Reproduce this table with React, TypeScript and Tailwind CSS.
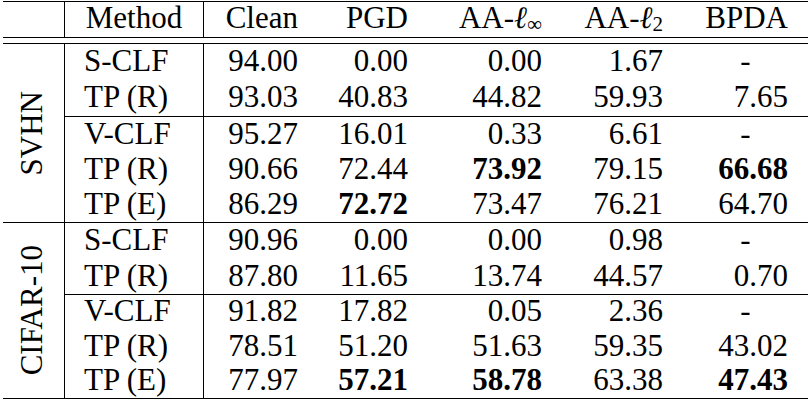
import React from 'react';

type Row = {
    method: string;
    vals: string[];
    bold?: number[];
};

type Group = {
    name: string;
    sub: { rows: Row[]; heights: number[] }[];
};

const groups: Group[] = [
    {
        name: 'SVHN',
        sub: [
            {
                heights: [36, 36],
                rows: [
                    { method: 'S-CLF', vals: ['94.00', '0.00', '0.00', '1.67', '-'] },
                    { method: 'TP (R)', vals: ['93.03', '40.83', '44.82', '59.93', '7.65'] },
                ],
            },
            {
                heights: [35, 35, 35],
                rows: [
                    { method: 'V-CLF', vals: ['95.27', '16.01', '0.33', '6.61', '-'] },
                    { method: 'TP (R)', vals: ['90.66', '72.44', '73.92', '79.15', '66.68'], bold: [2, 4] },
                    { method: 'TP (E)', vals: ['86.29', '72.72', '73.47', '76.21', '64.70'], bold: [1] },
                ],
            },
        ],
    },
    {
        name: 'CIFAR-10',
        sub: [
            {
                heights: [36, 35],
                rows: [
                    { method: 'S-CLF', vals: ['90.96', '0.00', '0.00', '0.98', '-'] },
                    { method: 'TP (R)', vals: ['87.80', '11.65', '13.74', '44.57', '0.70'] },
                ],
            },
            {
                heights: [34, 35, 34],
                rows: [
                    { method: 'V-CLF', vals: ['91.82', '17.82', '0.05', '2.36', '-'] },
                    { method: 'TP (R)', vals: ['78.51', '51.20', '51.63', '59.35', '43.02'] },
                    { method: 'TP (E)', vals: ['77.97', '57.21', '58.78', '63.38', '47.43'], bold: [1, 2, 4] },
                ],
            },
        ],
    },
];

// widths of the five number columns
const numCols = ['w-[114px]', 'w-[110px]', 'w-[134px]', 'w-[121px]', 'w-[125px]'];

function DataRow({ row, h }: { row: Row; h: number }) {
    return (
        <div className="flex" style={{ height: h }}>
            <div className="w-[140px] border-x border-black pl-[19px] flex items-center pb-[3px]">{row.method}</div>
            {row.vals.map((v, i) => (
                <div
                    key={i}
                    className={`${numCols[i]} flex items-center pb-[3px] ${v === '-' ? 'justify-center' : 'justify-end pr-[20px]'} ${row.bold?.includes(i) ? 'font-bold' : ''}`}
                >
                    {v}
                </div>
            ))}
        </div>
    );
}

export default function App() {
    return (
        <div className="w-[811px] h-[401px] bg-white text-black pl-[3px] pt-[1px] text-[31px] leading-none font-['Liberation_Serif','Times_New_Roman',serif]">
            <div className="w-[805px]">
                {/* Header */}
                <div className="flex h-[37px] border-y border-black">
                    <div className="w-[61px]" />
                    <div className="w-[140px] border-x border-black flex items-center justify-center pb-[5px]">Method</div>
                    <div className={`${numCols[0]} flex items-center justify-end pr-[20px] pb-[5px]`}>Clean</div>
                    <div className={`${numCols[1]} flex items-center justify-end pr-[20px] pb-[5px]`}>PGD</div>
                    <div className={`${numCols[2]} flex items-center justify-end pr-[20px] pb-[5px]`}>
                        AA-<span className="italic">ℓ</span>
                        <span className="text-[21px] relative top-[7px]">∞</span>
                    </div>
                    <div className={`${numCols[3]} flex items-center justify-end pr-[20px] pb-[5px]`}>
                        AA-<span className="italic">ℓ</span>
                        <span className="text-[21px] relative top-[7px]">2</span>
                    </div>
                    <div className={`${numCols[4]} flex items-center justify-end pr-[20px] pb-[5px]`}>BPDA</div>
                </div>
                {/* double rule */}
                <div className="h-[6px] border-b border-black" />

                {groups.map(g => (
                    <div key={g.name} className="flex border-b border-black">
                        <div className="w-[61px] flex items-center justify-center">
                            <span className="[writing-mode:vertical-rl] rotate-180 pl-[4px]">{g.name}</span>
                        </div>
                        <div className="flex flex-col">
                            {g.sub.map((s, si) => (
                                <div key={si} className={si === 0 ? 'border-b border-black' : ''}>
                                    {s.rows.map((r, ri) => (
                                        <DataRow key={ri} row={r} h={s.heights[ri]} />
                                    ))}
                                </div>
                            ))}
                        </div>
                    </div>
                ))}
            </div>
        </div>
    );
}
